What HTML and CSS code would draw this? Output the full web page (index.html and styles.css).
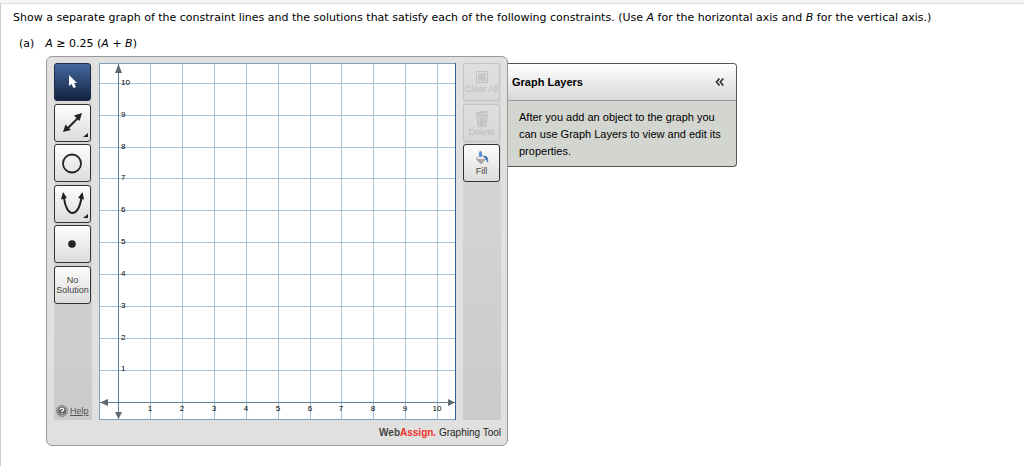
FILE: index.html
```html
<!DOCTYPE html>
<html lang="en">
  <head>
    <meta charset="UTF-8" />
    <title>Graphing Tool</title>
    <link rel="stylesheet" href="styles.css">
  </head>
  <body>
    <main class="question">
      <p class="prompt">Show a separate graph of the constraint lines and the solutions that satisfy each of the following constraints. (Use <i>A</i> for the horizontal axis and <i>B</i> for the vertical axis.)</p>
      <p class="part"><span>(a)</span><span><i>A</i> ≥ 0.25 (<i>A</i> + <i>B</i>)</span></p>

      <div class="graph-tool">
        <div class="tool-panel">
          <div class="workspace">
            <div class="toolbar">
              <div class="tools">
                <button class="tool selected" type="button" aria-label="Select">
                  <svg width="35" height="35" viewBox="0 0 35 35"><path d="M14 10V21L16.500 19L18.500 23L21 22L19 18H22Z" fill="#fff"/></svg>
                </button>
                <button class="tool" type="button" aria-label="Line">
                  <svg width="35" height="35" viewBox="0 0 35 35"><path d="M11 25L24 12" stroke="#222" stroke-width="2"/><path d="M27 8L24.500 16L19 10.500ZM8 27L10.500 19.500L16 25ZM33 28V32H28Z" fill="#222"/></svg>
                </button>
                <button class="tool" type="button" aria-label="Circle">
                  <svg width="35" height="35" viewBox="0 0 35 35"><circle cx="17" cy="17.500" r="9" fill="none" stroke="#222" stroke-width="1.800"/></svg>
                </button>
                <button class="tool" type="button" aria-label="Parabola">
                  <svg width="35" height="35" viewBox="0 0 35 35"><path d="M9 12C10 20 13 27 17.500 27S25 20 26.500 12" fill="none" stroke="#222" stroke-width="2"/><path d="M8 6L12 12L6 13.500ZM27.500 6L29 13.500L23 12ZM33 28V32H28Z" fill="#222"/></svg>
                </button>
                <button class="tool" type="button" aria-label="Point">
                  <svg width="35" height="35" viewBox="0 0 35 35"><circle cx="17" cy="17" r="3.800" fill="#222"/></svg>
                </button>
                <button class="tool" type="button">No<br>Solution</button>
              </div>
              <a class="help" href="#">
                <svg width="12" height="12" viewBox="0 0 12 12"><circle cx="6" cy="6" r="5.500" fill="#aaa" stroke="#888"/><circle cx="6" cy="6" r="4" fill="#666"/><path d="M4.300 4.700C4.300 2.800 7.700 2.800 7.700 4.700C7.700 5.800 6 5.700 6 7M6 8V9.200" fill="none" stroke="#fff" stroke-width="1.300"/></svg>
                <span>Help</span>
              </a>
            </div>

            <svg class="graph" width="357" height="357" viewBox="0 0 357 357" role="img" aria-label="Coordinate grid from 0 to 10">
              <rect x="0" y="0" width="357" height="357" fill="#fff"/>
              <path class="grid" d="M51.500 0V357M83.500 0V357M115.500 0V357M147.500 0V357M179.500 0V357M211.500 0V357M242.500 0V357M274.500 0V357M306.500 0V357M338.500 0V357"/>
              <path class="grid" d="M0 20.500H357M0 52.500H357M0 84.500H357M0 115.500H357M0 147.500H357M0 179.500H357M0 211.500H357M0 243.500H357M0 275.500H357M0 307.500H357"/>
              <path class="frame" d="M.5 357V.5H356"/>
              <path class="frame" d="M0 356.500H357"/>
              <path class="frame-right" d="M356.500 0V357"/>
              <path class="axis" d="M19.500 1V356M1 339.500H356"/>
              <path class="arrow" d="M19.500 1L23 10H16ZM19.500 356L16 349H23ZM1 339.500L9 336V343ZM356 339.500L349 336V343Z"/>
              <g class="numbers">
                <text x="22" y="22">10</text>
                <text x="22" y="54">9</text>
                <text x="22" y="86">8</text>
                <text x="22" y="117">7</text>
                <text x="22" y="149">6</text>
                <text x="22" y="181">5</text>
                <text x="22" y="213">4</text>
                <text x="22" y="245">3</text>
                <text x="22" y="277">2</text>
                <text x="22" y="308">1</text>
              </g>
              <g class="numbers across">
                <text x="51" y="348">1</text>
                <text x="83" y="348">2</text>
                <text x="115" y="348">3</text>
                <text x="147" y="348">4</text>
                <text x="179" y="348">5</text>
                <text x="211" y="348">6</text>
                <text x="242" y="348">7</text>
                <text x="274" y="348">8</text>
                <text x="306" y="348">9</text>
                <text x="338" y="348">10</text>
              </g>
            </svg>

            <div class="toolbar">
              <div class="actions">
                <button class="tool" type="button" disabled>
                  <svg width="14" height="14" viewBox="0 0 14 14"><rect x="1.500" y="1.500" width="11" height="11" fill="none" stroke="#777"/><rect x="3" y="3" width="8" height="8" fill="#888"/></svg>
                  <span>Clear All</span>
                </button>
                <button class="tool" type="button" disabled>
                  <svg width="16" height="18" viewBox="0 0 16 18"><path d="M2 4L14 3M6 3L9 2.500M3 6L4.500 17H11.500L13 6ZM6 7L6.500 16M8 7V16M10 7L9.500 16" fill="none" stroke="#666" stroke-width="1.500"/></svg>
                  <span>Delete</span>
                </button>
                <button class="tool" type="button">
                  <svg width="16" height="16" viewBox="0 0 16 16"><path d="M7 4L12 9L7 14L2 9Z" fill="#eee" stroke="#aaa"/><path d="M2 9H12L7 14Z" fill="#aaa"/><rect x="5" y="1" width="3" height="6" rx="1.500" fill="#5f93d2"/><path d="M9 6C13 5 15 8 14 13L11.500 9Z" fill="#4b7db8"/></svg>
                  <span>Fill</span>
                </button>
              </div>
            </div>
          </div>
          <div class="brand"><b>Web<em>Assign.</em></b> Graphing Tool</div>
        </div>

        <section class="layers">
          <header class="layers-head">
            <h2>Graph Layers</h2>
            <button class="collapse" type="button" aria-label="Collapse">
              <svg width="9" height="8" viewBox="0 0 9 8"><path d="M4.500 0.500L1.500 4L4.500 7.500M8.300 0.500L5.300 4L8.300 7.500" fill="none" stroke="#333" stroke-width="1.700"/></svg>
            </button>
          </header>
          <p class="layers-body">After you add an object to the graph you can use Graph Layers to view and edit its properties.</p>
        </section>
      </div>
    </main>
  </body>
</html>
```

FILE: styles.css
```css
* {
  box-sizing: border-box;
}

body {
  margin: 0;
  min-height: 100vh;
  display: flex;
  border-top: 3px solid #f5f5f5;
  background: #fff;
  color: #000;
  font-family: "DejaVu Sans", Verdana, sans-serif;
  font-size: 11px;
}

.question {
  flex: 1;
  padding: 5px 12px 16px;
  border-top: 1px solid #ddd;
  border-left: 1px solid #ccc;
}

.prompt,
.part {
  margin: 0;
  line-height: 18px;
}

.part {
  display: flex;
  gap: 11px;
  margin-top: 8px;
  padding-left: 6px;
}

.graph-tool {
  display: flex;
  align-items: flex-start;
  margin: 3px 0 0 33px;
  font-family: "Liberation Sans", Arial, sans-serif;
}

.tool-panel {
  padding: 6px 6px 5px 7px;
  border: 1px solid #999;
  border-radius: 6px;
  background: #e0e1df;
}

.workspace {
  display: flex;
  gap: 7px;
}

.toolbar {
  display: flex;
  flex-direction: column;
  justify-content: space-between;
  width: 38px;
  background: linear-gradient(#d9d9d9, #cbcbcb);
}

.tools,
.actions {
  display: flex;
  flex-direction: column;
  justify-content: space-between;
  height: 241px;
}

.actions {
  height: 119px;
}

.tool {
  display: flex;
  flex-direction: column;
  align-items: center;
  justify-content: center;
  width: 37px;
  height: 38px;
  padding: 0;
  border: 1px solid #333;
  border-radius: 3px;
  background: linear-gradient(#fdfdfd, #dcdcda);
  color: #444;
  font-family: "Liberation Sans", Arial, sans-serif;
  font-size: 9px;
  line-height: 10px;
}

.tool.selected {
  border-color: #1b2b48;
  background: linear-gradient(#4668a0, #14233f);
}

.tool:disabled {
  border-color: #777;
  opacity: 0.2;
}

.tool span {
  white-space: nowrap;
}

.graph {
  display: block;
}

.grid,
.axis,
.frame,
.frame-right {
  fill: none;
  stroke: #a6c3da;
}

.axis {
  stroke: #5d8098;
}

.frame {
  stroke: #7e9fbe;
}

.frame-right {
  stroke: #345f9c;
}

.arrow {
  fill: #5c696f;
}

.numbers {
  font-size: 8px;
}

.across {
  text-anchor: middle;
}

.help {
  display: flex;
  align-items: center;
  gap: 2px;
  padding: 0 0 3px 2px;
  color: #555;
  font-size: 9px;
  line-height: 12px;
}

.brand {
  margin-top: 5px;
  font-size: 10px;
  line-height: 15px;
  text-align: right;
  color: #222;
}

.brand b {
  color: #444;
}

.brand em {
  color: #f2302b;
  font-style: normal;
}

.layers {
  width: 229px;
  margin-top: 7px;
  border: 1px solid #555;
  border-left: 0;
  border-radius: 0 4px 4px 0;
  background: #d3d5d0;
  overflow: hidden;
}

.layers-head {
  display: flex;
  align-items: center;
  justify-content: space-between;
  height: 37px;
  padding: 0 12px 0 4px;
  border-bottom: 1px solid #999;
  background: linear-gradient(#fff, #d8d8d8);
}

.layers h2 {
  margin: 0;
  font-size: 11px;
}

.collapse {
  display: flex;
  padding: 0;
  border: 0;
  background: none;
}

.layers-body {
  margin: 0;
  padding: 8px 14px 6px 11px;
  font-size: 11px;
  line-height: 17px;
}
```
